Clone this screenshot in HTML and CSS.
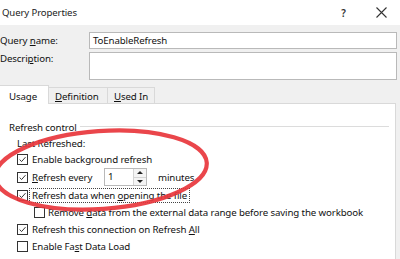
FILE: index.html
```html
<!DOCTYPE html>
<html>
<head>
<meta charset="utf-8">
<link rel="stylesheet" href="styles.css">
</head>
<body>
<div class="window">
  <div class="titlebar">
    <span class="title">Query Properties</span>
    <span class="controls">
      <span class="help">?</span>
      <span class="close"><svg width="11" height="11" viewBox="0 0 11 11"><path d="M0.5 0.5 L10.5 10.5 M10.5 0.5 L0.5 10.5" stroke="#333" stroke-width="1.1" fill="none"/></svg></span>
    </span>
  </div>
  <div class="client">
    <div class="field">
      <span class="label">Query <u>n</u>ame:</span>
      <div class="input">ToEnableRefresh</div>
    </div>
    <div class="field desc">
      <span class="label">Descri<u>p</u>tion:</span>
      <div class="input tall"></div>
    </div>
    <div class="tabs">
      <div class="tab active">Usa<u>g</u>e</div>
      <div class="tab def"><u>D</u>efinition</div>
      <div class="tab used"><u>U</u>sed In</div>
    </div>
    <div class="panel">
      <div class="group-title"><span>Refresh control</span><span class="rule"></span></div>
      <div class="row plain">Last Refreshed:</div>
      <div class="row r1"><span class="cb"><svg viewBox="0 0 11 11"><path d="M2 5.6 L4.4 8 L9.2 2.6" stroke="#222" stroke-width="1.1" fill="none"/></svg></span><span>Enable background refresh</span></div>
      <div class="row r2"><span class="cb"><svg viewBox="0 0 11 11"><path d="M2 5.6 L4.4 8 L9.2 2.6" stroke="#222" stroke-width="1.1" fill="none"/></svg></span><span class="every"><u>R</u>efresh every</span>
        <span class="spin"><span class="val">1</span><span class="arrows"><span class="up"></span><span class="down"></span></span></span>
        <span class="minutes">minutes</span></div>
      <div class="row r3"><span class="cb"><svg viewBox="0 0 11 11"><path d="M2 5.6 L4.4 8 L9.2 2.6" stroke="#222" stroke-width="1.1" fill="none"/></svg></span><span class="focus">Refresh data when <u>o</u>pening the file</span></div>
      <div class="row r4 indent"><span class="cb"></span><span>Remove <u>d</u>ata from the external data range before saving the workbook</span></div>
      <div class="row r5"><span class="cb"><svg viewBox="0 0 11 11"><path d="M2 5.6 L4.4 8 L9.2 2.6" stroke="#222" stroke-width="1.1" fill="none"/></svg></span><span>Refresh this connection on Refresh <u>A</u>ll</span></div>
      <div class="row r6"><span class="cb"></span><span>Enable Fa<u>s</u>t Data Load</span></div>
    </div>
  </div>
  <svg class="annotation" viewBox="0 0 400 259" width="400" height="259">
    <ellipse cx="101" cy="170" rx="106" ry="39" transform="rotate(-4 101 170)" fill="none" stroke="#e8363c" stroke-width="4.2" opacity="0.92"/>
  </svg>
</div>
</body>
</html>
```

FILE: styles.css
```css
html, body {
  margin: 0;
  padding: 0;
  background: #f0f0f0;
}
.window {
  position: relative;
  width: 400px;
  height: 259px;
  overflow: hidden;
  background: #f0f0f0;
  font-family: "Noto Sans", "Open Sans", sans-serif;
  font-size: 9.7px;
  letter-spacing: -0.12px;
  color: #111;
}
u {
  text-decoration: underline;
  text-underline-offset: 1px;
}
.titlebar {
  height: 25px;
  background: #fff;
  display: flex;
  align-items: center;
}
.title {
  padding-left: 2px;
  font-size: 9.6px;
  color: #222;
}
.controls {
  margin-left: auto;
  display: flex;
  align-items: center;
}
.help {
  width: 39px;
  text-align: center;
  font-size: 10px;
  font-weight: 600;
  color: #333;
}
.close {
  width: 37px;
  display: flex;
  justify-content: center;
  align-items: center;
}
.close svg { display: block; }
.client {
  padding-top: 7px;
}
.field {
  display: flex;
  align-items: center;
  margin-bottom: 3px;
}
.field .label {
  width: 89px;
  flex-shrink: 0;
}
.field.desc {
  align-items: flex-start;
}
.input {
  box-sizing: border-box;
  width: 308px;
  height: 17px;
  background: #fff;
  border: 1px solid #b9b9b9;
  padding-left: 3px;
  line-height: 15px;
}
.input.tall {
  height: 28px;
}
.tabs {
  display: flex;
  align-items: flex-end;
  margin-top: 5px;
  margin-left: -1px;
  height: 18px;
  position: relative;
  z-index: 1;
}
.tab {
  box-sizing: border-box;
  height: 16px;
  border: 1px solid #d9d9d9;
  border-bottom: none;
  background: #f0f0f0;
  line-height: 17px;
  margin-left: -1px;
  white-space: nowrap;
  flex-shrink: 0;
}
.tab.active {
  margin-left: 0;
  height: 19px;
  margin-bottom: -1px;
  background: #fff;
  width: 50px;
  padding-left: 9px;
  line-height: 21px;
}
.tab.def { width: 60px; padding-left: 6px; }
.tab.used { width: 48px; padding-left: 6px; }
.panel {
  box-sizing: border-box;
  margin-left: -1px;
  width: 397px;
  height: 160px;
  background: #fff;
  border: 1px solid #d9d9d9;
  padding-top: 15px;
}
.group-title {
  display: flex;
  align-items: center;
  height: 16px;
  padding-left: 9px;
  padding-right: 6px;
}
.group-title .rule {
  flex: 1;
  height: 1px;
  background: #dcdcdc;
  margin-left: 3px;
  margin-top: -1px;
}
.row {
  display: flex;
  align-items: center;
  height: 17px;
  padding-left: 17px;
  white-space: nowrap;
}
.row.plain { height: 16px; }
.row.r2, .row.r3 { height: 18px; }
.row.r6 { height: 17px; }
.row.indent { padding-left: 34px; }
.cb {
  box-sizing: border-box;
  width: 11px;
  height: 11px;
  border: 1px solid #333;
  background: #fff;
  margin-right: 4px;
  flex-shrink: 0;
  display: flex;
}
.cb svg {
  width: 9px;
  height: 9px;
  display: block;
}
.indent .cb { margin-right: 3px; }
.every {
  width: 72px;
}
.spin {
  box-sizing: border-box;
  width: 43px;
  height: 18px;
  border: 1px solid #b9b9b9;
  display: flex;
  background: #fff;
}
.spin .val {
  flex: 1;
  padding-left: 3px;
  line-height: 16px;
}
.arrows {
  width: 12px;
  display: flex;
  flex-direction: column;
  border-left: 1px solid #d4d4d4;
  background: #f4f4f4;
}
.arrows span {
  flex: 1;
  display: flex;
  justify-content: center;
  align-items: center;
}
.arrows .up { border-bottom: 1px solid #d4d4d4; }
.arrows .up::before {
  content: "";
  border-left: 3px solid transparent;
  border-right: 3px solid transparent;
  border-bottom: 3px solid #222;
}
.arrows .down::before {
  content: "";
  border-left: 3px solid transparent;
  border-right: 3px solid transparent;
  border-top: 3px solid #222;
}
.minutes {
  margin-left: 11px;
}
.focus {
  outline: 1px dotted #444;
  outline-offset: 0;
  padding: 0 2px;
  margin-left: -2px;
  line-height: 13px;
}
.annotation {
  position: absolute;
  left: 0;
  top: 0;
  pointer-events: none;
}
```
